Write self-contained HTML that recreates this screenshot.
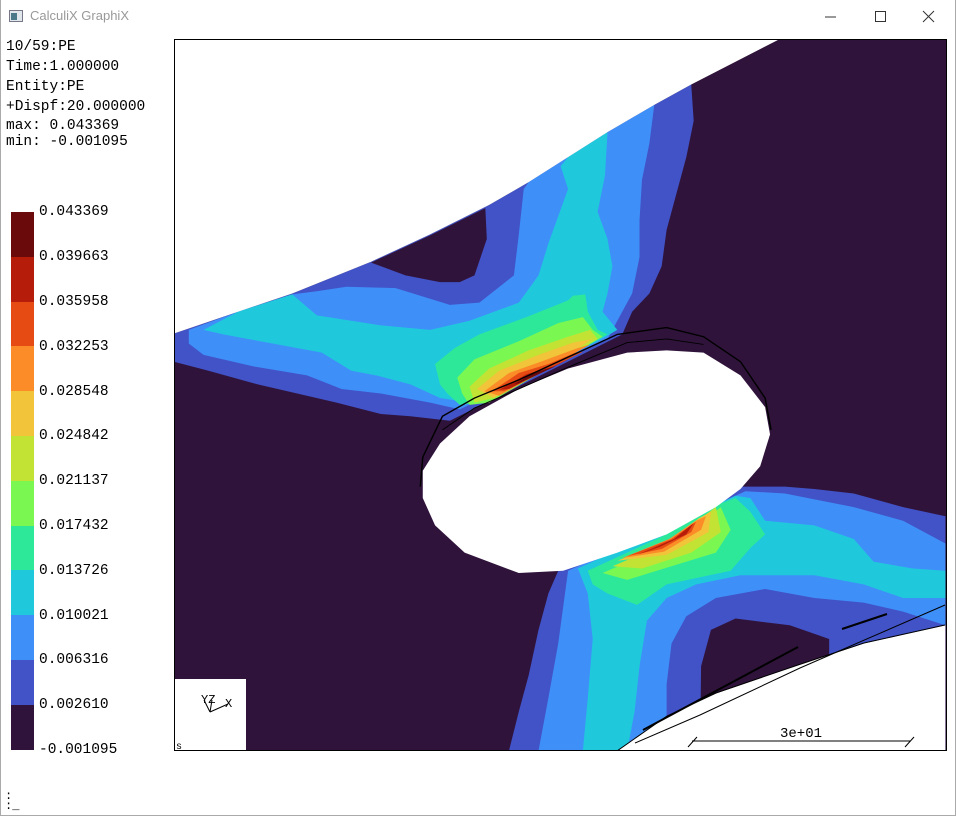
<!DOCTYPE html>
<html><head><meta charset="utf-8"><style>
body{margin:0;width:956px;height:816px;background:#fff;overflow:hidden;position:relative;font-family:"Liberation Mono",monospace}
.t{position:absolute;font-size:14.5px;color:#000;white-space:pre;line-height:16px}
.title{position:absolute;left:30px;top:8px;font-family:"Liberation Sans",sans-serif;font-size:13px;color:#999}
</style></head><body>
<div style="position:absolute;left:0;top:0;width:1px;height:816px;background:#aaa"></div>
<div style="position:absolute;right:0;top:0;width:1px;height:816px;background:#aaa"></div>
<div style="position:absolute;left:0;bottom:0;width:956px;height:1px;background:#aaa"></div>
<svg style="position:absolute;left:9px;top:10px" width="14" height="12"><rect x="0.5" y="0.5" width="13" height="11" fill="#dfe6ec" stroke="#778"/><rect x="2" y="3" width="6" height="7" fill="#4a7a8a"/></svg>
<div class="title">CalculiX GraphiX</div>
<svg style="position:absolute;left:820px;top:8px" width="120" height="18"><line x1="5" y1="9" x2="16" y2="9" stroke="#333"/><rect x="55.5" y="3.5" width="10" height="10" fill="none" stroke="#333"/><path d="M103 3 L114 14 M114 3 L103 14" stroke="#333"/></svg>

<div class="t" style="left:6px;top:39px">10/59:PE</div>
<div class="t" style="left:6px;top:59px">Time:1.000000</div>
<div class="t" style="left:6px;top:79px">Entity:PE</div>
<div class="t" style="left:6px;top:99px">+Dispf:20.000000</div>
<div class="t" style="left:6px;top:118px">max: 0.043369</div>
<div class="t" style="left:6px;top:134px">min: -0.001095</div>

<svg style="position:absolute;left:11px;top:212px" width="23" height="538">
<rect y="0" width="23" height="45" fill="#6a0a0a"/>
<rect y="45" width="23" height="45" fill="#b51d0a"/>
<rect y="90" width="23" height="45" fill="#e64b14"/>
<rect y="134" width="23" height="45" fill="#fb8c28"/>
<rect y="179" width="23" height="45" fill="#f1c43a"/>
<rect y="224" width="23" height="45" fill="#c3e334"/>
<rect y="269" width="23" height="45" fill="#7bf751"/>
<rect y="314" width="23" height="45" fill="#2ee89a"/>
<rect y="358" width="23" height="45" fill="#20c8dc"/>
<rect y="403" width="23" height="45" fill="#3f8ff9"/>
<rect y="448" width="23" height="45" fill="#4153c7"/>
<rect y="493" width="23" height="45" fill="#30133b"/>
</svg>
<div class="t" style="left:39px;top:204px">0.043369</div>
<div class="t" style="left:39px;top:249px">0.039663</div>
<div class="t" style="left:39px;top:294px">0.035958</div>
<div class="t" style="left:39px;top:339px">0.032253</div>
<div class="t" style="left:39px;top:384px">0.028548</div>
<div class="t" style="left:39px;top:428px">0.024842</div>
<div class="t" style="left:39px;top:473px">0.021137</div>
<div class="t" style="left:39px;top:518px">0.017432</div>
<div class="t" style="left:39px;top:563px">0.013726</div>
<div class="t" style="left:39px;top:608px">0.010021</div>
<div class="t" style="left:39px;top:652px">0.006316</div>
<div class="t" style="left:39px;top:697px">0.002610</div>
<div class="t" style="left:39px;top:742px">-0.001095</div>
<div class="t" style="left:5px;top:788px;font-size:12px">:</div>
<div class="t" style="left:5px;top:798px;font-size:12px">:_</div>

<svg style="position:absolute;left:0;top:0" width="956" height="816">
<defs><clipPath id="c"><rect x="174" y="39" width="772" height="711"/></clipPath></defs>
<g clip-path="url(#c)">
<rect x="174" y="39" width="772" height="711" fill="#30133b"/>
<g transform="translate(174,39) scale(0.4926,0.4545)">
<polygon fill="#4153c7" points="0,648 130,600 240,560 400,490 520,430 640,365 720,315 800,260 880,205 975,145 1050,100 1055,180 1040,260 1020,340 1000,420 990,500 965,560 930,600 910,650 560,840 480,830 420,825 330,800 250,780 170,760 70,730 0,710"/>
<polygon fill="#30133b" points="400,492 520,432 632,372 635,440 610,520 580,535 540,535 470,520"/>
<polygon fill="#3f8ff9" points="30,640 130,600 240,562 290,555 350,545 450,548 560,585 620,580 690,520 700,430 710,330 720,315 800,260 880,205 975,145 965,230 950,310 945,400 945,480 930,560 900,620 880,660 580,815 520,800 420,780 340,770 270,740 160,720 60,695 30,670"/>
<polygon fill="#20c8dc" points="130,600 240,562 290,608 420,630 520,640 600,620 700,580 740,520 760,450 790,360 800,330 785,280 800,260 880,205 875,300 860,380 880,440 890,500 880,560 870,600 900,640 860,665 600,800 540,790 480,760 410,740 360,730 300,690 200,670 100,650 60,640"/>
<polygon fill="#2ee89a" points="530,715 570,680 620,650 720,610 800,575 810,565 835,562 840,600 860,640 880,650 620,800 580,805 555,780 540,760"/>
<polygon fill="#7bf751" points="575,745 610,705 700,665 780,625 830,612 850,640 870,655 640,800 600,805 585,780"/>
<polygon fill="#c3e334" points="600,765 640,725 720,685 800,655 845,640 860,660 650,790 610,800"/>
<polygon fill="#f1c43a" points="615,770 660,730 740,695 810,668 850,660 650,790"/>
<polygon fill="#fb8c28" points="630,775 680,735 750,708 820,680 845,672 660,785"/>
<polygon fill="#e64b14" points="645,775 700,735 760,715 815,690 830,688 670,775"/>
<polygon fill="#b51d0a" points="660,772 715,738 770,720 810,700 680,770"/>
<polygon fill="#6a0a0a" points="690,760 730,735 775,720 700,757"/>
<polygon fill="#4153c7" points="780,1170 1150,985 1240,985 1300,990 1380,1000 1480,1030 1566,1050 1566,1566 680,1566 700,1480 720,1400 740,1300 760,1220"/>
<polygon fill="#30133b" points="1068,1566 1070,1380 1090,1300 1140,1275 1250,1290 1330,1320 1330,1566"/>
<polygon fill="#3f8ff9" points="800,1170 1160,995 1240,1000 1380,1030 1480,1060 1566,1110 1566,1290 1480,1260 1400,1240 1300,1230 1200,1210 1100,1230 1040,1270 1010,1330 1000,1420 1000,1500 1010,1566 740,1566 760,1450 780,1330 790,1250"/>
<polygon fill="#20c8dc" points="820,1165 1140,1005 1170,1010 1200,1060 1300,1070 1380,1100 1420,1150 1500,1165 1566,1170 1566,1230 1480,1230 1400,1200 1300,1180 1150,1180 1060,1200 1000,1230 960,1280 945,1380 935,1480 920,1566 830,1566 840,1450 850,1320 840,1220"/>
<polygon fill="#2ee89a" points="840,1170 1000,1090 1090,1030 1140,1010 1170,1040 1200,1090 1170,1120 1130,1170 1000,1200 940,1245 880,1220 850,1200"/>
<polygon fill="#7bf751" points="870,1175 1000,1115 1080,1055 1110,1030 1130,1080 1100,1130 980,1170 920,1190"/>
<polygon fill="#c3e334" points="890,1160 1000,1110 1075,1050 1100,1030 1110,1085 1050,1130 950,1165"/>
<polygon fill="#f1c43a" points="900,1148 1000,1105 1065,1055 1090,1040 1085,1085 1000,1135"/>
<polygon fill="#fb8c28" points="910,1142 1005,1100 1060,1060 1080,1050 1070,1080 995,1128"/>
<polygon fill="#e64b14" points="920,1138 1010,1100 1060,1062 1050,1085 990,1122"/>
<polygon fill="#b51d0a" points="940,1135 1015,1100 1055,1065 1040,1090 985,1118"/>
<polygon fill="#fff" points="0,0 1230,0 1050,100 975,145 880,205 800,260 720,315 640,365 520,430 400,490 240,560 130,600 0,648"/>
<polygon fill="#fff" points="1566,1290 1400,1330 1260,1380 1100,1440 1000,1490 900,1566 1566,1566"/>
<polygon fill="#30133b" points="920,640 1000,633 1075,653 1150,708 1200,788 1213,860 1210,870 1200,810 1150,740 1075,690 1000,685 920,690"/>
<polygon fill="#fff" points="1000,685 1075,690 1150,740 1200,810 1210,870 1190,940 1150,990 1100,1030 1000,1090 900,1130 790,1170 700,1175 590,1130 530,1070 505,1010 505,950 540,890 600,830 700,770 800,725 920,690"/>
<g fill="none" stroke="#000" stroke-width="3">
<polyline points="500,985 505,920 545,830 610,790 700,750 800,700 900,650 1000,635 1075,655 1150,710 1200,790 1212,860"/>
<polyline points="545,860 610,812 700,770 800,722 920,668 1000,660 1075,672" stroke-width="2"/>
</g>
</g>
<g fill="none" stroke="#000">
<path d="M643 730 L798 647" stroke-width="2"/>
<path d="M842 629 L887 614" stroke-width="2"/>
<path d="M635 743 L700 715 L800 668 L945 605" stroke-width="1"/>
<path d="M617 751 L667 716 L716 693 L795 666 L864 643 L945 625" stroke-width="1"/>
</g>
<rect x="174" y="679" width="72" height="71" fill="#fff"/>
</g>
<rect x="174.5" y="39.5" width="772" height="711" fill="none" stroke="#000"/>
<g stroke="#000" fill="none" stroke-width="1">
<path d="M210 712 L204 700 M210 712 L212 700 M210 712 L228 704"/>
<path d="M692 741 L910 741 M688 747 L697 737 M905 747 L914 737"/>
</g>
<text x="201" y="703" font-family="Liberation Mono" font-size="12">YZ</text>
<text x="225" y="707" font-family="Liberation Mono" font-size="12">X</text>
<text x="176" y="749" font-family="Liberation Mono" font-size="10">s</text>
<text x="780" y="737" font-family="Liberation Mono" font-size="14">3e+01</text>
</svg>
</body></html>
